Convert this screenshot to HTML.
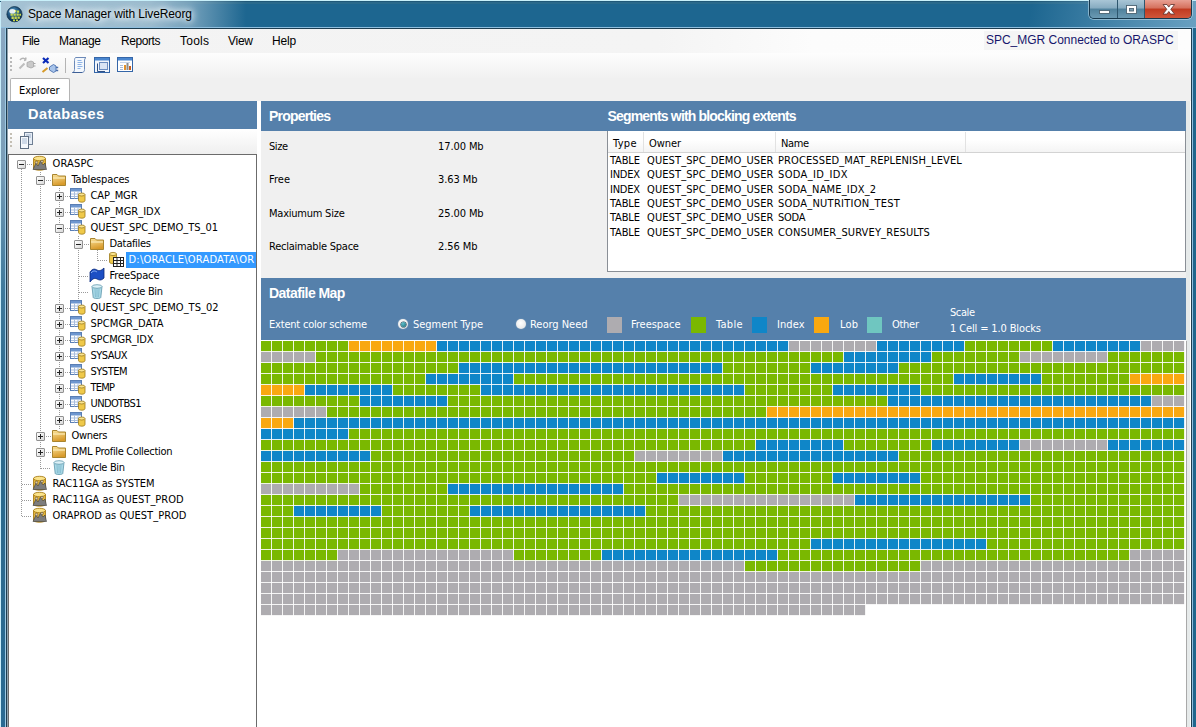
<!DOCTYPE html>
<html><head><meta charset="utf-8"><title>Space Manager with LiveReorg</title>
<style>
*{margin:0;padding:0;box-sizing:border-box}
html,body{width:1196px;height:727px;overflow:hidden}
body{position:relative;background:#3F7FA3;font-family:"DejaVu Sans Condensed","Liberation Sans","DejaVu Sans",sans-serif;font-size:11px;color:#000}
.abs,body>div,body>span{position:absolute}
#title{left:0;top:0;width:1196px;height:28px;background:linear-gradient(180deg,#c8f0fa 0,#c8f0fa 1px,#1f5878 1px,#1f5878 2px,#2a6a8c 2px,#2a6a8c 4px,#1d6690 4px,#1d6690 27px,#8fbfdf 27px,#8fbfdf 28px)}
#titleR{left:960px;top:1px;width:236px;height:26px;background:linear-gradient(100deg,rgba(110,165,198,0) 0,rgba(110,165,198,0) 30%,rgba(120,172,203,.55) 75%,rgba(130,180,210,.75) 100%)}
#titleL{left:1px;top:1px;width:250px;height:26px;background:linear-gradient(90deg,rgba(176,202,218,.92) 0,rgba(168,196,213,.9) 150px,rgba(150,184,205,.7) 190px,rgba(29,101,143,0) 245px)}
.tt0{position:absolute;top:7px;font-size:12px;color:#000;white-space:nowrap;font-family:"Liberation Sans",sans-serif;text-shadow:0 0 6px #fff,0 0 8px #fff,0 0 10px #cfe6f2}
.tb{position:absolute;top:84px;font-size:11px;white-space:nowrap}
.cn{position:absolute;top:33px;font-size:12px;color:#15156b;white-space:nowrap;font-family:"Liberation Sans",sans-serif}
.hb{position:absolute;color:#fff;font-weight:bold;white-space:nowrap;font-family:"Liberation Sans",sans-serif}
#frameL{left:0;top:28px;width:7px;height:699px;background:linear-gradient(90deg,#c8edfa 0,#c8edfa 1px,rgba(0,0,0,0) 1px,rgba(0,0,0,0) 5px,#9cc8e4 5px,#9cc8e4 6px,#1d3d50 6px,#1d3d50 7px),linear-gradient(180deg,#8aa8c2 0,#7a9eb8 130px,#3f7a9c 260px,#2d6a8c 380px,#2a6a92 699px)}
#frameR{left:1191px;top:28px;width:5px;height:699px;background:linear-gradient(90deg,#1d3d50 0,#1d3d50 1px,#8fbfdf 1px,#8fbfdf 2px,#23638a 2px,#1b6a90 5px)}
#client{left:7px;top:28px;width:1184px;height:699px;background:#f0f0f0;border-top:1px solid #1d3d50;border-left:1px solid #8fa2ae}
#menubar{left:8px;top:29px;width:1183px;height:24px;background:linear-gradient(90deg,#f3f3f3 0,#f4f4f4 55%,#fcfcfc 68%,#fdfdfd 100%)}
.mi{position:absolute;top:34px;font-size:12px;white-space:nowrap;font-family:"Liberation Sans",sans-serif}
.lb{font-family:"Liberation Sans",sans-serif}
#conn{left:984px;top:31px;width:194px;height:19px;background:#f5f5f5}
#toolbar{left:8px;top:53px;width:1183px;height:25px;background:linear-gradient(180deg,#fdfdfd,#f1f1f1)}
#tabstrip{left:8px;top:78px;width:1183px;height:23px;background:#f0f0f0}
#tab{left:10px;top:78px;width:60px;height:23px;background:#fff;border:1px solid #b4b4b4;border-bottom:none;border-radius:2px 2px 0 0;font-size:11px;line-height:21px;padding-left:9px}
.hdr{background:#5580ab;color:#fff}
#dbh{left:8px;top:101px;width:249px;height:28px}
#dbh span{position:absolute;left:20px;top:5px;font-weight:bold;font-size:14.5px;letter-spacing:1.1px}
#dbtb{left:8px;top:129px;width:249px;height:25px;background:linear-gradient(180deg,#fff,#efefef)}
#treebox{left:8px;top:154px;width:249px;height:580px;background:#fff;border:1px solid #6b6b6b}
#split{left:257px;top:101px;width:4px;height:626px;background:#fff}
#ph{left:261px;top:101px;width:925px;height:30px}
#ph b{position:absolute;top:7px;font-size:14px;letter-spacing:-.6px;white-space:nowrap}
#pbody{left:261px;top:131px;width:925px;height:147px;background:#f0f0f0}
.pl{position:absolute;font-size:11px;white-space:nowrap}
#list{left:607px;top:131px;width:579px;height:141px;background:#fff;border:1px solid #8a8f96;border-top:none}
#lh{left:608px;top:131px;width:577px;height:22px;background:linear-gradient(180deg,#fff 0,#fff 40%,#f4f4f4 100%);border-bottom:1px solid #d3d3d3}
.lhc{position:absolute;top:132px;height:20px;border-right:1px solid #e2e2e2}
.sg{position:absolute;font-size:11px;height:14px;line-height:14px;white-space:nowrap}
.lt{position:absolute;top:137px;font-size:11px;white-space:nowrap}
#mh{left:261px;top:278px;width:925px;height:63px}
#mh b{position:absolute;left:8px;top:7px;font-size:14px;letter-spacing:-.6px}
.ml{position:absolute;top:318px;font-size:11px;color:#fff;white-space:nowrap}
.sw{position:absolute;top:317px;width:15px;height:15.5px}
#rightpad{left:1186px;top:101px;width:5px;height:626px;background:linear-gradient(90deg,#e6eaea 0,#e6eaea 4px,#fff 4px)}
#mapbg{left:257px;top:340px;width:929px;height:387px;background:#fff}
#grid{left:261px;top:341px;width:924px;height:275px;overflow:hidden}
#grid i{position:absolute;height:11px;display:block}
#grid .g{background:#7ab800}#grid .b{background:#0f86c8}#grid .o{background:#f9a810}#grid .x{background:#aeacb0}
#gl{left:261px;top:341px;width:924px;height:275px;background:
 repeating-linear-gradient(90deg,transparent 0,transparent 10px,rgba(255,255,255,.88) 10px,rgba(255,255,255,.88) 11px),
 repeating-linear-gradient(180deg,transparent 0,transparent 10px,rgba(255,255,255,.88) 10px,rgba(255,255,255,.88) 11px)}
/* tree */
.ic{width:16px;height:16px;display:block}
.ti{position:absolute;width:16px;height:16px}
.tt{position:absolute;height:16px;line-height:16px;font-size:11px;white-space:nowrap;padding:0 2px;margin-left:-2px}
.tt.sel{background:#3399ff;color:#fff;overflow:hidden}
.ex{position:absolute;width:9px;height:9px;border:1px solid #919191;background:linear-gradient(135deg,#fff,#d8d8d8);border-radius:1px}
.ex .h{position:absolute;left:1px;top:3px;width:5px;height:1px;background:#222}
.ex .v{position:absolute;left:3px;top:1px;width:1px;height:5px;background:#222}
.hd{position:absolute;height:1px;background:repeating-linear-gradient(90deg,#9a9a9a 0,#9a9a9a 1px,transparent 1px,transparent 2px)}
.vd{position:absolute;width:1px;background:repeating-linear-gradient(180deg,#9a9a9a 0,#9a9a9a 1px,transparent 1px,transparent 2px)}
.radio{position:absolute;top:319px;width:10px;height:10px;border-radius:50%;background:radial-gradient(circle at 45% 40%,#fff 0,#ececec 60%,#d0d4d8 100%);box-shadow:0 0 1px rgba(255,255,255,.6)}
</style></head><body>
<div id="title"></div><div style="left:0;top:2px;width:1px;height:26px;background:#c8edfa"></div><div id="titleR"></div><div id="titleL"></div>
<div id="wb" style="left:1089px;top:0;width:103px;height:19px;border:1px solid #16384d;border-top:none;border-radius:0 0 5px 5px;overflow:hidden;box-shadow:0 0 0 1px rgba(200,225,238,.55)">
<span style="position:absolute;left:0;top:0;width:28px;height:18px;background:linear-gradient(180deg,#a9c6d6 0,#86abc0 45%,#4f819c 50%,#6b9ab3 100%);border-right:1px solid #2d566e"></span>
<span style="position:absolute;left:28px;top:0;width:27px;height:18px;background:linear-gradient(180deg,#a9c6d6 0,#86abc0 45%,#4f819c 50%,#6b9ab3 100%);border-right:1px solid #2d566e"></span>
<span style="position:absolute;left:55px;top:0;width:46px;height:18px;background:linear-gradient(180deg,#e8a093 0,#d5705c 45%,#c03a20 50%,#d0563a 100%)"></span>
<svg style="position:absolute;left:0;top:0" width="101" height="18" viewBox="0 0 101 18"><rect x="9.500" y="10.500" width="10" height="3" fill="#fff" stroke="#4d6472" stroke-width=".9"/><rect x="36.500" y="5.500" width="10" height="8" fill="#fff" stroke="#4d6472" stroke-width=".9"/><rect x="39.500" y="8.500" width="4" height="2.500" fill="#7ea0b3" stroke="#4d6472" stroke-width=".9"/><path d="M73 4.500h4l1.800 2.600 1.800-2.600h4l-3.800 4.800 3.800 4.800h-4l-1.800-2.600-1.800 2.600h-4l3.800-4.800z" fill="#fff" stroke="#6b3b34" stroke-width=".9"/></svg>
</div>
<div id="frameL"></div><div id="frameR"></div>
<div id="client"></div>
<div id="menubar"></div>
<div id="conn"></div>
<div id="toolbar"></div>
<div id="tabstrip"></div>
<div id="tab"></div>
<svg style="position:absolute;left:0;top:0" width="140" height="80" viewBox="0 0 140 80">
<!-- app icon -->
<defs><radialGradient id="gl1" cx=".4" cy=".3" r=".8"><stop offset="0" stop-color="#5aa0c8"/><stop offset=".5" stop-color="#1c4f7a"/><stop offset="1" stop-color="#0a2030"/></radialGradient></defs>
<circle cx="14.500" cy="14.200" r="7.600" fill="url(#gl1)" stroke="#10324a" stroke-width=".8"/>
<path d="M14 10h2.300v2.300H14zM17 10.500h2.200v2.200H17zM10.500 13.500h2.300v2.300h-2.300zM13.500 13.500h2.300v2.300h-2.300zM16.500 13.500h2.300v2.300h-2.300zM19.300 13.800h1.700v2h-1.700zM11.500 16.600h2.300v2.300h-2.300zM14.500 16.600h2.300v2.300h-2.300zM17.500 16.600h2.300v2.200h-2.300zM13 19.600h2v1.600h-2zM16 19.600h2v1.500h-2z" fill="#c9d94c"/>
<ellipse cx="12.300" cy="11.300" rx="3" ry="2.300" fill="#fff" opacity=".85"/>
<!-- grip -->
<path d="M10 58h2M10 62h2M10 66h2M10 70h2" stroke="#b9b9b9" stroke-width="2" stroke-dasharray="2 0"/>
<!-- icon1 gray connect -->
<path d="M20 60c2-2.500 5-2 5.500 0l-1.500.5M25.500 60l.5-2.500" stroke="#b5b5b5" stroke-width="1.500" fill="none"/>
<path d="M19.500 68.500l5-5" stroke="#bdbdbd" stroke-width="2"/>
<path d="M27 62.500l4-1.500 2.500 1v5l-2.500 1-4-1.500z" fill="#c9c9c9" stroke="#a6a6a6" stroke-width=".8"/><path d="M33.500 63.500h2M33.500 66h2" stroke="#a6a6a6" stroke-width="1.200"/>
<!-- icon2 blue X + plug -->
<path d="M43 58l5.500 5M48.500 58L43 63" stroke="#0a2bb8" stroke-width="2.200"/>
<path d="M42.500 72l5-4" stroke="#d69a28" stroke-width="2"/>
<path d="M49.500 67l4-2.500 2.500 1.500v5l-2.500 1.500-4-2.500z" fill="#a8c4ea" stroke="#4a6fae" stroke-width=".9"/><path d="M56 67.500h2.200M56 70.500h2.200" stroke="#4a6fae" stroke-width="1.300"/>
<!-- separator -->
<path d="M65.500 58v15" stroke="#b4b4b4" stroke-width="1"/>
<!-- icon3 script -->
<path d="M75.500 57.500h10.500c-1.200.8-1.500 2-1.500 3.500v8.500c0 2-1 3-2.500 3h-9.500c1.300-.5 2-1.500 2-3v-9c0-1.500.3-2.300 1-3z" fill="#f4f8fd" stroke="#6b89b8" stroke-width="1"/>
<path d="M77.500 60.500h4M77.500 62.500h5M77.500 64.500h4M77.500 66.500h5M77.500 68.500h3" stroke="#8db3e6" stroke-width="1"/>
<path d="M72.500 72.500h9.500" stroke="#3d5f96" stroke-width="1"/>
<!-- icon4 window -->
<rect x="94.500" y="57.500" width="15" height="15" fill="#f1f5fb" stroke="#3566a8"/><rect x="95" y="58" width="14" height="2.500" fill="#4a86cf"/>
<rect x="99.500" y="62.500" width="8" height="7" fill="#d9e4f4" stroke="#6a8cc0" stroke-width="1"/><path d="M97.500 63.500v8h7.500" stroke="#2d4f85" stroke-width="1" fill="none"/>
<!-- icon5 chart window -->
<rect x="117.500" y="57.500" width="15" height="14" fill="#fff" stroke="#3566a8"/><rect x="118" y="58" width="14" height="2.500" fill="#4a86cf"/>
<path d="M120 62.500h10" stroke="#c9d6ea" stroke-width="1"/><path d="M120 65.500h3M120 67.500h3M120 69.500h3" stroke="#a9bcd9" stroke-width="1"/>
<rect x="124" y="65" width="2" height="5" fill="#e0912c"/><rect x="126.500" y="63" width="2" height="7" fill="#8c8c8c"/><rect x="129" y="66" width="2" height="4" fill="#c9601f"/>
</svg>
<div id="dbh" class="hdr"></div>
<div id="dbtb"></div>
<svg style="position:absolute;left:8px;top:129px" width="40" height="25" viewBox="0 0 40 25"><path d="M2 5h2M2 9h2M2 13h2M2 17h2" stroke="#c4bfb4" stroke-width="2"/><rect x="16.500" y="3.500" width="8" height="12" fill="#e6edf6" stroke="#6f7f93"/><path d="M18 6h5M18 8h5" stroke="#9db1cb"/><rect x="12.500" y="7.500" width="8" height="12" fill="#f5f8fc" stroke="#5f6f83"/><path d="M14 10h5M14 12h5M14 14h5" stroke="#a9bbd3"/></svg>
<div id="treebox"></div>
<div id="treeitems" style="left:0;top:0"><span class="vd" style="left:21px;top:169px;height:348px"></span><span class="vd" style="left:40px;top:172px;height:297px"></span><span class="vd" style="left:59px;top:188px;height:241px"></span><span class="vd" style="left:78px;top:236px;height:65px"></span><span class="vd" style="left:97px;top:250px;height:11px"></span><span class="hd" style="left:27px;top:164px;width:5px"></span><span class="ex" style="left:17px;top:160px"><b class="h"></b></span><span class="ti" style="left:32px;top:155px"><svg class="ic" viewBox="0 0 16 16"><path d="M1.5 3.5v9.5c0 1.3 2.6 2.2 6 2.2s6-.9 6-2.200v-9.500z" fill="#E9B93A" stroke="#A97E17" stroke-width=".9"/><ellipse cx="7.5" cy="3.5" rx="6" ry="2.2" fill="#FBE38A" stroke="#A97E17" stroke-width=".9"/><path d="M1 14.500l3-6.500 2 3 2.500-5 2.500 4 2-2 1.500 6.500z" fill="#7d7d7d" stroke="#3c3c3c" stroke-width=".6"/><circle cx="4.500" cy="7.500" r="1.300" fill="#d9c9a8" stroke="#4b3f2a" stroke-width=".5"/><circle cx="10" cy="6.500" r="1.300" fill="#d9c9a8" stroke="#4b3f2a" stroke-width=".5"/></svg></span><span class="tt" style="left:52.5px;top:156px;letter-spacing:0.17px">ORASPC</span><span class="hd" style="left:46px;top:180px;width:5px"></span><span class="ex" style="left:36px;top:176px"><b class="h"></b></span><span class="ti" style="left:51px;top:171px"><svg class="ic" viewBox="0 0 16 16"><defs><linearGradient id="fg" x1="0" y1="0" x2="0.3" y2="1"><stop offset="0" stop-color="#FAE29A"/><stop offset="1" stop-color="#D89A2B"/></linearGradient></defs><path d="M1.5 3.5h4.5l1.5 1.5h7v9.5h-13z" fill="url(#fg)" stroke="#A9852F"/><path d="M2 7h12" stroke="#FFF3C4" stroke-width="1"/></svg></span><span class="tt" style="left:71.5px;top:172px;letter-spacing:-0.16px">Tablespaces</span><span class="hd" style="left:65px;top:196px;width:5px"></span><span class="ex" style="left:55px;top:192px"><b class="h"></b><b class="v"></b></span><span class="ti" style="left:70px;top:187px"><svg class="ic" viewBox="0 0 16 16"><rect x="0.5" y="1.5" width="11" height="10" fill="#fff" stroke="#5A7FB5"/><rect x="1" y="2" width="10" height="2.5" fill="#6E97D0"/><path d="M1 7h10M1 9.5h10M4.5 4.5v7M8 4.5v7" stroke="#A9BEDD" stroke-width="1"/><path d="M8.5 7.5v6c0 1 1.5 1.7 3.3 1.7s3.2-.7 3.200-1.700v-6z" fill="#EFC94A" stroke="#9C7A1C" stroke-width=".8"/><ellipse cx="11.700" cy="7.500" rx="3.200" ry="1.500" fill="#FAE48E" stroke="#9C7A1C" stroke-width=".8"/></svg></span><span class="tt" style="left:90.5px;top:188px;letter-spacing:-0.11px">CAP_MGR</span><span class="hd" style="left:65px;top:212px;width:5px"></span><span class="ex" style="left:55px;top:208px"><b class="h"></b><b class="v"></b></span><span class="ti" style="left:70px;top:203px"><svg class="ic" viewBox="0 0 16 16"><rect x="0.5" y="1.5" width="11" height="10" fill="#fff" stroke="#5A7FB5"/><rect x="1" y="2" width="10" height="2.5" fill="#6E97D0"/><path d="M1 7h10M1 9.5h10M4.5 4.5v7M8 4.5v7" stroke="#A9BEDD" stroke-width="1"/><path d="M8.5 7.5v6c0 1 1.5 1.7 3.3 1.7s3.2-.7 3.200-1.700v-6z" fill="#EFC94A" stroke="#9C7A1C" stroke-width=".8"/><ellipse cx="11.700" cy="7.500" rx="3.200" ry="1.500" fill="#FAE48E" stroke="#9C7A1C" stroke-width=".8"/></svg></span><span class="tt" style="left:90.5px;top:204px;letter-spacing:0.00px">CAP_MGR_IDX</span><span class="hd" style="left:65px;top:228px;width:5px"></span><span class="ex" style="left:55px;top:224px"><b class="h"></b></span><span class="ti" style="left:70px;top:219px"><svg class="ic" viewBox="0 0 16 16"><rect x="0.5" y="1.5" width="11" height="10" fill="#fff" stroke="#5A7FB5"/><rect x="1" y="2" width="10" height="2.5" fill="#6E97D0"/><path d="M1 7h10M1 9.5h10M4.5 4.5v7M8 4.5v7" stroke="#A9BEDD" stroke-width="1"/><path d="M8.5 7.5v6c0 1 1.5 1.7 3.3 1.7s3.2-.7 3.200-1.700v-6z" fill="#EFC94A" stroke="#9C7A1C" stroke-width=".8"/><ellipse cx="11.700" cy="7.500" rx="3.200" ry="1.500" fill="#FAE48E" stroke="#9C7A1C" stroke-width=".8"/></svg></span><span class="tt" style="left:90.5px;top:220px;letter-spacing:-0.01px">QUEST_SPC_DEMO_TS_01</span><span class="hd" style="left:84px;top:244px;width:5px"></span><span class="ex" style="left:74px;top:240px"><b class="h"></b></span><span class="ti" style="left:89px;top:235px"><svg class="ic" viewBox="0 0 16 16"><defs><linearGradient id="fg" x1="0" y1="0" x2="0.3" y2="1"><stop offset="0" stop-color="#FAE29A"/><stop offset="1" stop-color="#D89A2B"/></linearGradient></defs><path d="M1.5 3.5h4.5l1.5 1.5h7v9.5h-13z" fill="url(#fg)" stroke="#A9852F"/><path d="M2 7h12" stroke="#FFF3C4" stroke-width="1"/></svg></span><span class="tt" style="left:109.5px;top:236px;letter-spacing:-0.30px">Datafiles</span><span class="hd" style="left:98px;top:260px;width:10px"></span><span class="ti" style="left:108px;top:251px"><svg class="ic" viewBox="0 0 16 16"><path d="M1.500 3v8c0 1 1.500 1.700 3.500 1.700s3.500-.7 3.500-1.700v-8z" fill="#EFC94A" stroke="#9C7A1C" stroke-width=".8"/><ellipse cx="5" cy="3" rx="3.500" ry="1.600" fill="#FAE48E" stroke="#9C7A1C" stroke-width=".8"/><rect x="5.500" y="6.500" width="10" height="9" fill="#fff" stroke="#222"/><path d="M5.500 9.500h10M5.500 12.500h10M9 6.500v9M12.500 6.500v9" stroke="#222" stroke-width="1"/></svg></span><span class="tt sel" style="left:128.5px;top:252px;width:130px;margin-left:-3px;padding-left:3px;letter-spacing:0.22px">D:\ORACLE\ORADATA\OR</span><span class="hd" style="left:79px;top:276px;width:10px"></span><span class="ti" style="left:89px;top:267px"><svg class="ic" viewBox="0 0 16 16"><path d="M1 5c3-4 5-3 7-2s4 1 7-2v10c-3 3-5 2-7 1s-4-1-7 3z" fill="#1C4FC4" stroke="#0B2A7A" stroke-width=".8"/><path d="M2 6c2.500-3 4.500-2 6-1" stroke="#8FB4F5" fill="none"/></svg></span><span class="tt" style="left:109.5px;top:268px;letter-spacing:-0.13px">FreeSpace</span><span class="hd" style="left:79px;top:292px;width:10px"></span><span class="ti" style="left:89px;top:283px"><svg class="ic" viewBox="0 0 16 16"><path d="M3 3.5l1.200 11c.1.600 1.800 1 3.800 1s3.700-.4 3.800-1l1.200-11z" fill="#A9D8E6" stroke="#5E97AB" stroke-width=".8"/><ellipse cx="8" cy="3.5" rx="5" ry="1.800" fill="#DDF1F7" stroke="#5E97AB" stroke-width=".8"/><path d="M6 6l.5 8M10 6l-.5 8M8 6.200v8" stroke="#7FB9CC" stroke-width=".8"/></svg></span><span class="tt" style="left:109.5px;top:284px;letter-spacing:-0.35px">Recycle Bin</span><span class="hd" style="left:65px;top:308px;width:5px"></span><span class="ex" style="left:55px;top:304px"><b class="h"></b><b class="v"></b></span><span class="ti" style="left:70px;top:299px"><svg class="ic" viewBox="0 0 16 16"><rect x="0.5" y="1.5" width="11" height="10" fill="#fff" stroke="#5A7FB5"/><rect x="1" y="2" width="10" height="2.5" fill="#6E97D0"/><path d="M1 7h10M1 9.5h10M4.5 4.5v7M8 4.5v7" stroke="#A9BEDD" stroke-width="1"/><path d="M8.5 7.5v6c0 1 1.5 1.7 3.3 1.7s3.2-.7 3.200-1.700v-6z" fill="#EFC94A" stroke="#9C7A1C" stroke-width=".8"/><ellipse cx="11.700" cy="7.500" rx="3.200" ry="1.500" fill="#FAE48E" stroke="#9C7A1C" stroke-width=".8"/></svg></span><span class="tt" style="left:90.5px;top:300px;letter-spacing:0.02px">QUEST_SPC_DEMO_TS_02</span><span class="hd" style="left:65px;top:324px;width:5px"></span><span class="ex" style="left:55px;top:320px"><b class="h"></b><b class="v"></b></span><span class="ti" style="left:70px;top:315px"><svg class="ic" viewBox="0 0 16 16"><rect x="0.5" y="1.5" width="11" height="10" fill="#fff" stroke="#5A7FB5"/><rect x="1" y="2" width="10" height="2.5" fill="#6E97D0"/><path d="M1 7h10M1 9.5h10M4.5 4.5v7M8 4.5v7" stroke="#A9BEDD" stroke-width="1"/><path d="M8.5 7.5v6c0 1 1.5 1.7 3.3 1.7s3.2-.7 3.200-1.700v-6z" fill="#EFC94A" stroke="#9C7A1C" stroke-width=".8"/><ellipse cx="11.700" cy="7.500" rx="3.200" ry="1.500" fill="#FAE48E" stroke="#9C7A1C" stroke-width=".8"/></svg></span><span class="tt" style="left:90.5px;top:316px;letter-spacing:0.05px">SPCMGR_DATA</span><span class="hd" style="left:65px;top:340px;width:5px"></span><span class="ex" style="left:55px;top:336px"><b class="h"></b><b class="v"></b></span><span class="ti" style="left:70px;top:331px"><svg class="ic" viewBox="0 0 16 16"><rect x="0.5" y="1.5" width="11" height="10" fill="#fff" stroke="#5A7FB5"/><rect x="1" y="2" width="10" height="2.5" fill="#6E97D0"/><path d="M1 7h10M1 9.5h10M4.5 4.5v7M8 4.5v7" stroke="#A9BEDD" stroke-width="1"/><path d="M8.5 7.5v6c0 1 1.5 1.7 3.3 1.7s3.2-.7 3.200-1.700v-6z" fill="#EFC94A" stroke="#9C7A1C" stroke-width=".8"/><ellipse cx="11.700" cy="7.500" rx="3.200" ry="1.500" fill="#FAE48E" stroke="#9C7A1C" stroke-width=".8"/></svg></span><span class="tt" style="left:90.5px;top:332px;letter-spacing:-0.17px">SPCMGR_IDX</span><span class="hd" style="left:65px;top:356px;width:5px"></span><span class="ex" style="left:55px;top:352px"><b class="h"></b><b class="v"></b></span><span class="ti" style="left:70px;top:347px"><svg class="ic" viewBox="0 0 16 16"><rect x="0.5" y="1.5" width="11" height="10" fill="#fff" stroke="#5A7FB5"/><rect x="1" y="2" width="10" height="2.5" fill="#6E97D0"/><path d="M1 7h10M1 9.5h10M4.5 4.5v7M8 4.5v7" stroke="#A9BEDD" stroke-width="1"/><path d="M8.5 7.5v6c0 1 1.5 1.7 3.3 1.7s3.2-.7 3.200-1.700v-6z" fill="#EFC94A" stroke="#9C7A1C" stroke-width=".8"/><ellipse cx="11.700" cy="7.500" rx="3.200" ry="1.500" fill="#FAE48E" stroke="#9C7A1C" stroke-width=".8"/></svg></span><span class="tt" style="left:90.5px;top:348px;letter-spacing:-0.52px">SYSAUX</span><span class="hd" style="left:65px;top:372px;width:5px"></span><span class="ex" style="left:55px;top:368px"><b class="h"></b><b class="v"></b></span><span class="ti" style="left:70px;top:363px"><svg class="ic" viewBox="0 0 16 16"><rect x="0.5" y="1.5" width="11" height="10" fill="#fff" stroke="#5A7FB5"/><rect x="1" y="2" width="10" height="2.5" fill="#6E97D0"/><path d="M1 7h10M1 9.5h10M4.5 4.5v7M8 4.5v7" stroke="#A9BEDD" stroke-width="1"/><path d="M8.5 7.5v6c0 1 1.5 1.7 3.3 1.7s3.2-.7 3.200-1.700v-6z" fill="#EFC94A" stroke="#9C7A1C" stroke-width=".8"/><ellipse cx="11.700" cy="7.500" rx="3.200" ry="1.500" fill="#FAE48E" stroke="#9C7A1C" stroke-width=".8"/></svg></span><span class="tt" style="left:90.5px;top:364px;letter-spacing:-0.49px">SYSTEM</span><span class="hd" style="left:65px;top:388px;width:5px"></span><span class="ex" style="left:55px;top:384px"><b class="h"></b><b class="v"></b></span><span class="ti" style="left:70px;top:379px"><svg class="ic" viewBox="0 0 16 16"><rect x="0.5" y="1.5" width="11" height="10" fill="#fff" stroke="#5A7FB5"/><rect x="1" y="2" width="10" height="2.5" fill="#6E97D0"/><path d="M1 7h10M1 9.5h10M4.5 4.5v7M8 4.5v7" stroke="#A9BEDD" stroke-width="1"/><path d="M8.5 7.5v6c0 1 1.5 1.7 3.3 1.7s3.2-.7 3.200-1.700v-6z" fill="#EFC94A" stroke="#9C7A1C" stroke-width=".8"/><ellipse cx="11.700" cy="7.500" rx="3.200" ry="1.500" fill="#FAE48E" stroke="#9C7A1C" stroke-width=".8"/></svg></span><span class="tt" style="left:90.5px;top:380px;letter-spacing:-0.74px">TEMP</span><span class="hd" style="left:65px;top:404px;width:5px"></span><span class="ex" style="left:55px;top:400px"><b class="h"></b><b class="v"></b></span><span class="ti" style="left:70px;top:395px"><svg class="ic" viewBox="0 0 16 16"><rect x="0.5" y="1.5" width="11" height="10" fill="#fff" stroke="#5A7FB5"/><rect x="1" y="2" width="10" height="2.5" fill="#6E97D0"/><path d="M1 7h10M1 9.5h10M4.5 4.5v7M8 4.5v7" stroke="#A9BEDD" stroke-width="1"/><path d="M8.5 7.5v6c0 1 1.5 1.7 3.3 1.7s3.2-.7 3.200-1.700v-6z" fill="#EFC94A" stroke="#9C7A1C" stroke-width=".8"/><ellipse cx="11.700" cy="7.500" rx="3.200" ry="1.500" fill="#FAE48E" stroke="#9C7A1C" stroke-width=".8"/></svg></span><span class="tt" style="left:90.5px;top:396px;letter-spacing:-0.61px">UNDOTBS1</span><span class="hd" style="left:65px;top:420px;width:5px"></span><span class="ex" style="left:55px;top:416px"><b class="h"></b><b class="v"></b></span><span class="ti" style="left:70px;top:411px"><svg class="ic" viewBox="0 0 16 16"><rect x="0.5" y="1.5" width="11" height="10" fill="#fff" stroke="#5A7FB5"/><rect x="1" y="2" width="10" height="2.5" fill="#6E97D0"/><path d="M1 7h10M1 9.5h10M4.5 4.5v7M8 4.5v7" stroke="#A9BEDD" stroke-width="1"/><path d="M8.5 7.5v6c0 1 1.5 1.7 3.3 1.7s3.2-.7 3.200-1.700v-6z" fill="#EFC94A" stroke="#9C7A1C" stroke-width=".8"/><ellipse cx="11.700" cy="7.500" rx="3.200" ry="1.500" fill="#FAE48E" stroke="#9C7A1C" stroke-width=".8"/></svg></span><span class="tt" style="left:90.5px;top:412px;letter-spacing:-0.49px">USERS</span><span class="hd" style="left:46px;top:436px;width:5px"></span><span class="ex" style="left:36px;top:432px"><b class="h"></b><b class="v"></b></span><span class="ti" style="left:51px;top:427px"><svg class="ic" viewBox="0 0 16 16"><defs><linearGradient id="fg" x1="0" y1="0" x2="0.3" y2="1"><stop offset="0" stop-color="#FAE29A"/><stop offset="1" stop-color="#D89A2B"/></linearGradient></defs><path d="M1.5 3.5h4.5l1.5 1.5h7v9.5h-13z" fill="url(#fg)" stroke="#A9852F"/><path d="M2 7h12" stroke="#FFF3C4" stroke-width="1"/></svg></span><span class="tt" style="left:71.5px;top:428px;letter-spacing:-0.29px">Owners</span><span class="hd" style="left:46px;top:452px;width:5px"></span><span class="ex" style="left:36px;top:448px"><b class="h"></b><b class="v"></b></span><span class="ti" style="left:51px;top:443px"><svg class="ic" viewBox="0 0 16 16"><defs><linearGradient id="fg" x1="0" y1="0" x2="0.3" y2="1"><stop offset="0" stop-color="#FAE29A"/><stop offset="1" stop-color="#D89A2B"/></linearGradient></defs><path d="M1.5 3.5h4.5l1.5 1.5h7v9.5h-13z" fill="url(#fg)" stroke="#A9852F"/><path d="M2 7h12" stroke="#FFF3C4" stroke-width="1"/></svg></span><span class="tt" style="left:71.5px;top:444px;letter-spacing:-0.32px">DML Profile Collection</span><span class="hd" style="left:41px;top:468px;width:10px"></span><span class="ti" style="left:51px;top:459px"><svg class="ic" viewBox="0 0 16 16"><path d="M3 3.5l1.200 11c.1.600 1.800 1 3.800 1s3.700-.4 3.800-1l1.200-11z" fill="#A9D8E6" stroke="#5E97AB" stroke-width=".8"/><ellipse cx="8" cy="3.5" rx="5" ry="1.800" fill="#DDF1F7" stroke="#5E97AB" stroke-width=".8"/><path d="M6 6l.5 8M10 6l-.5 8M8 6.200v8" stroke="#7FB9CC" stroke-width=".8"/></svg></span><span class="tt" style="left:71.5px;top:460px;letter-spacing:-0.35px">Recycle Bin</span><span class="hd" style="left:22px;top:484px;width:10px"></span><span class="ti" style="left:32px;top:475px"><svg class="ic" viewBox="0 0 16 16"><path d="M1.5 3.5v9.5c0 1.3 2.6 2.2 6 2.2s6-.9 6-2.200v-9.500z" fill="#E9B93A" stroke="#A97E17" stroke-width=".9"/><ellipse cx="7.5" cy="3.5" rx="6" ry="2.2" fill="#FBE38A" stroke="#A97E17" stroke-width=".9"/><path d="M1 14.500l3-6.500 2 3 2.500-5 2.500 4 2-2 1.500 6.500z" fill="#7d7d7d" stroke="#3c3c3c" stroke-width=".6"/><circle cx="4.500" cy="7.500" r="1.300" fill="#d9c9a8" stroke="#4b3f2a" stroke-width=".5"/><circle cx="10" cy="6.500" r="1.300" fill="#d9c9a8" stroke="#4b3f2a" stroke-width=".5"/></svg></span><span class="tt" style="left:52.5px;top:476px;letter-spacing:-0.12px">RAC11GA as SYSTEM</span><span class="hd" style="left:22px;top:500px;width:10px"></span><span class="ti" style="left:32px;top:491px"><svg class="ic" viewBox="0 0 16 16"><path d="M1.5 3.5v9.5c0 1.3 2.6 2.2 6 2.2s6-.9 6-2.200v-9.500z" fill="#E9B93A" stroke="#A97E17" stroke-width=".9"/><ellipse cx="7.5" cy="3.5" rx="6" ry="2.2" fill="#FBE38A" stroke="#A97E17" stroke-width=".9"/><path d="M1 14.500l3-6.500 2 3 2.500-5 2.500 4 2-2 1.500 6.500z" fill="#7d7d7d" stroke="#3c3c3c" stroke-width=".6"/><circle cx="4.500" cy="7.500" r="1.300" fill="#d9c9a8" stroke="#4b3f2a" stroke-width=".5"/><circle cx="10" cy="6.500" r="1.300" fill="#d9c9a8" stroke="#4b3f2a" stroke-width=".5"/></svg></span><span class="tt" style="left:52.5px;top:492px;letter-spacing:-0.01px">RAC11GA as QUEST_PROD</span><span class="hd" style="left:22px;top:516px;width:10px"></span><span class="ti" style="left:32px;top:507px"><svg class="ic" viewBox="0 0 16 16"><path d="M1.5 3.5v9.5c0 1.3 2.6 2.2 6 2.2s6-.9 6-2.200v-9.500z" fill="#E9B93A" stroke="#A97E17" stroke-width=".9"/><ellipse cx="7.5" cy="3.5" rx="6" ry="2.2" fill="#FBE38A" stroke="#A97E17" stroke-width=".9"/><path d="M1 14.500l3-6.500 2 3 2.500-5 2.500 4 2-2 1.500 6.500z" fill="#7d7d7d" stroke="#3c3c3c" stroke-width=".6"/><circle cx="4.500" cy="7.500" r="1.300" fill="#d9c9a8" stroke="#4b3f2a" stroke-width=".5"/><circle cx="10" cy="6.500" r="1.300" fill="#d9c9a8" stroke="#4b3f2a" stroke-width=".5"/></svg></span><span class="tt" style="left:52.5px;top:508px;letter-spacing:0.02px">ORAPROD as QUEST_PROD</span></div>
<div id="split"></div>
<div id="ph" class="hdr"></div>
<div id="pbody"></div>
<div id="list"></div><div id="lh"></div>
<div class="lhc" style="left:608px;width:36px"></div><div class="lhc" style="left:644px;width:132px"></div><div class="lhc" style="left:776px;width:190px"></div>
<div id="mh" class="hdr"></div>

<span class="radio" style="left:398px"><i style="position:absolute;left:2.5px;top:2.5px;width:5px;height:5px;border-radius:50%;background:radial-gradient(circle at 40% 35%,#5fc0cc,#12606f);box-shadow:0 0 0 .6px #2b4a5a"></i></span>
<span class="radio" style="left:516px"></span>
<span class="sw" style="left:607px;background:#aeacb0"></span>
<span class="sw" style="left:691px;background:#7ab800"></span>
<span class="sw" style="left:752px;background:#0f86c8"></span>
<span class="sw" style="left:814px;background:#f9a810"></span>
<span class="sw" style="left:867px;background:#6fc6c0"></span>

<div id="mapbg"></div>
<div id="grid"><i class="g" style="left:0px;top:0px;width:88px"></i><i class="o" style="left:88px;top:0px;width:88px"></i><i class="b" style="left:176px;top:0px;width:352px"></i><i class="x" style="left:528px;top:0px;width:88px"></i><i class="b" style="left:616px;top:0px;width:88px"></i><i class="g" style="left:704px;top:0px;width:88px"></i><i class="b" style="left:792px;top:0px;width:88px"></i><i class="x" style="left:880px;top:0px;width:44px"></i><i class="x" style="left:0px;top:11px;width:55px"></i><i class="g" style="left:55px;top:11px;width:528px"></i><i class="b" style="left:583px;top:11px;width:88px"></i><i class="g" style="left:671px;top:11px;width:88px"></i><i class="x" style="left:759px;top:11px;width:88px"></i><i class="g" style="left:847px;top:11px;width:77px"></i><i class="g" style="left:0px;top:22px;width:198px"></i><i class="b" style="left:198px;top:22px;width:264px"></i><i class="g" style="left:462px;top:22px;width:88px"></i><i class="b" style="left:550px;top:22px;width:88px"></i><i class="g" style="left:638px;top:22px;width:286px"></i><i class="g" style="left:0px;top:33px;width:165px"></i><i class="b" style="left:165px;top:33px;width:88px"></i><i class="g" style="left:253px;top:33px;width:440px"></i><i class="b" style="left:693px;top:33px;width:88px"></i><i class="g" style="left:781px;top:33px;width:88px"></i><i class="o" style="left:869px;top:33px;width:55px"></i><i class="o" style="left:0px;top:44px;width:44px"></i><i class="b" style="left:44px;top:44px;width:88px"></i><i class="g" style="left:132px;top:44px;width:88px"></i><i class="b" style="left:220px;top:44px;width:264px"></i><i class="g" style="left:484px;top:44px;width:88px"></i><i class="b" style="left:572px;top:44px;width:88px"></i><i class="g" style="left:660px;top:44px;width:264px"></i><i class="g" style="left:0px;top:55px;width:99px"></i><i class="b" style="left:99px;top:55px;width:88px"></i><i class="g" style="left:187px;top:55px;width:440px"></i><i class="b" style="left:627px;top:55px;width:264px"></i><i class="x" style="left:891px;top:55px;width:33px"></i><i class="x" style="left:0px;top:66px;width:66px"></i><i class="g" style="left:66px;top:66px;width:440px"></i><i class="o" style="left:506px;top:66px;width:418px"></i><i class="o" style="left:0px;top:77px;width:33px"></i><i class="b" style="left:33px;top:77px;width:891px"></i><i class="b" style="left:0px;top:88px;width:88px"></i><i class="g" style="left:88px;top:88px;width:836px"></i><i class="g" style="left:0px;top:99px;width:495px"></i><i class="b" style="left:495px;top:99px;width:88px"></i><i class="g" style="left:583px;top:99px;width:88px"></i><i class="b" style="left:671px;top:99px;width:88px"></i><i class="x" style="left:759px;top:99px;width:88px"></i><i class="b" style="left:847px;top:99px;width:77px"></i><i class="b" style="left:0px;top:110px;width:110px"></i><i class="g" style="left:110px;top:110px;width:264px"></i><i class="x" style="left:374px;top:110px;width:88px"></i><i class="b" style="left:462px;top:110px;width:176px"></i><i class="g" style="left:638px;top:110px;width:286px"></i><i class="g" style="left:0px;top:121px;width:924px"></i><i class="g" style="left:0px;top:132px;width:396px"></i><i class="b" style="left:396px;top:132px;width:88px"></i><i class="g" style="left:484px;top:132px;width:88px"></i><i class="b" style="left:572px;top:132px;width:88px"></i><i class="g" style="left:660px;top:132px;width:264px"></i><i class="x" style="left:0px;top:143px;width:99px"></i><i class="g" style="left:99px;top:143px;width:88px"></i><i class="b" style="left:187px;top:143px;width:176px"></i><i class="g" style="left:363px;top:143px;width:561px"></i><i class="g" style="left:0px;top:154px;width:418px"></i><i class="x" style="left:418px;top:154px;width:176px"></i><i class="b" style="left:594px;top:154px;width:176px"></i><i class="g" style="left:770px;top:154px;width:154px"></i><i class="g" style="left:0px;top:165px;width:33px"></i><i class="b" style="left:33px;top:165px;width:88px"></i><i class="g" style="left:121px;top:165px;width:88px"></i><i class="b" style="left:209px;top:165px;width:176px"></i><i class="g" style="left:385px;top:165px;width:539px"></i><i class="g" style="left:0px;top:176px;width:924px"></i><i class="g" style="left:0px;top:187px;width:924px"></i><i class="g" style="left:0px;top:198px;width:550px"></i><i class="b" style="left:550px;top:198px;width:176px"></i><i class="g" style="left:726px;top:198px;width:198px"></i><i class="g" style="left:0px;top:209px;width:77px"></i><i class="x" style="left:77px;top:209px;width:176px"></i><i class="g" style="left:253px;top:209px;width:88px"></i><i class="b" style="left:341px;top:209px;width:176px"></i><i class="g" style="left:517px;top:209px;width:352px"></i><i class="x" style="left:869px;top:209px;width:55px"></i><i class="x" style="left:0px;top:220px;width:484px"></i><i class="g" style="left:484px;top:220px;width:176px"></i><i class="x" style="left:660px;top:220px;width:264px"></i><i class="x" style="left:0px;top:231px;width:924px"></i><i class="x" style="left:0px;top:242px;width:924px"></i><i class="x" style="left:0px;top:253px;width:924px"></i><i class="x" style="left:0px;top:264px;width:605px"></i></div><div id="gl"></div>
<div id="rightpad"></div><div style="left:1186px;top:341px;width:1px;height:386px;background:#a9a9a9"></div>
<div id="texts" style="left:0;top:0"><span class="mi" style="left:22px;letter-spacing:-0.45px">File</span><span class="mi" style="left:59px;letter-spacing:-0.28px">Manage</span><span class="mi" style="left:121px;letter-spacing:-0.42px">Reports</span><span class="mi" style="left:180px;letter-spacing:0.25px">Tools</span><span class="mi" style="left:228px;letter-spacing:-0.27px">View</span><span class="mi" style="left:272px;letter-spacing:-0.13px">Help</span><span class="tt0" style="left:28px;letter-spacing:-0.13px">Space Manager with LiveReorg</span><span class="tb" style="left:19px;letter-spacing:-0.10px">Explorer</span><span class="cn" style="left:986px;letter-spacing:-0.02px">SPC_MGR Connected to ORASPC</span><span class="hb" style="left:28px;top:106px;letter-spacing:0.43px;font-size:14.5px">Databases</span><span class="hb" style="left:269px;top:108px;letter-spacing:-0.81px;font-size:14px">Properties</span><span class="hb" style="left:607.5px;top:108px;letter-spacing:-0.83px;font-size:14px">Segments with blocking extents</span><span class="hb" style="left:269px;top:285px;letter-spacing:-0.55px;font-size:14px">Datafile Map</span><span class="pl" style="left:269px;top:140px;letter-spacing:-0.44px">Size</span><span class="pl" style="left:438px;top:140px;letter-spacing:-0.09px">17.00 Mb</span><span class="pl" style="left:269px;top:173px;letter-spacing:0.03px">Free</span><span class="pl" style="left:438px;top:173px;letter-spacing:-0.08px">3.63 Mb</span><span class="pl" style="left:269px;top:207px;letter-spacing:-0.23px">Maxiumum Size</span><span class="pl" style="left:438px;top:207px;letter-spacing:-0.09px">25.00 Mb</span><span class="pl" style="left:269px;top:240px;letter-spacing:-0.23px">Reclaimable Space</span><span class="pl" style="left:438px;top:240px;letter-spacing:-0.08px">2.56 Mb</span><span class="ml" style="left:269px;letter-spacing:-0.20px">Extent color scheme</span><span class="ml" style="left:413px;letter-spacing:-0.02px">Segment Type</span><span class="ml" style="left:530px;letter-spacing:-0.02px">Reorg Need</span><span class="ml" style="left:631px;letter-spacing:-0.05px">Freespace</span><span class="ml" style="left:716px;letter-spacing:0.27px">Table</span><span class="ml" style="left:777px;letter-spacing:0.07px">Index</span><span class="ml" style="left:840px;letter-spacing:0.17px">Lob</span><span class="ml" style="left:892px;letter-spacing:-0.28px">Other</span><span class="ml" style="left:950px;top:306px;letter-spacing:-0.41px">Scale</span><span class="ml" style="left:950px;top:322px;letter-spacing:-0.13px">1 Cell = 1.0 Blocks</span><span class="lt" style="left:613px;letter-spacing:0.31px">Type</span><span class="lt" style="left:649px;letter-spacing:-0.08px">Owner</span><span class="lt" style="left:781px;letter-spacing:-0.40px">Name</span><span class="sg" style="left:610px;top:154.0px;letter-spacing:-0.13px">TABLE</span><span class="sg" style="left:647px;top:154.0px;letter-spacing:0.11px">QUEST_SPC_DEMO_USER</span><span class="sg" style="left:778px;top:154.0px;letter-spacing:0.11px">PROCESSED_MAT_REPLENISH_LEVEL</span><span class="sg" style="left:610px;top:168.3px;letter-spacing:-0.25px">INDEX</span><span class="sg" style="left:647px;top:168.3px;letter-spacing:0.11px">QUEST_SPC_DEMO_USER</span><span class="sg" style="left:778px;top:168.3px;letter-spacing:0.35px">SODA_ID_IDX</span><span class="sg" style="left:610px;top:182.6px;letter-spacing:-0.25px">INDEX</span><span class="sg" style="left:647px;top:182.6px;letter-spacing:0.11px">QUEST_SPC_DEMO_USER</span><span class="sg" style="left:778px;top:182.6px;letter-spacing:0.17px">SODA_NAME_IDX_2</span><span class="sg" style="left:610px;top:196.9px;letter-spacing:-0.13px">TABLE</span><span class="sg" style="left:647px;top:196.9px;letter-spacing:0.11px">QUEST_SPC_DEMO_USER</span><span class="sg" style="left:778px;top:196.9px;letter-spacing:0.25px">SODA_NUTRITION_TEST</span><span class="sg" style="left:610px;top:211.2px;letter-spacing:-0.13px">TABLE</span><span class="sg" style="left:647px;top:211.2px;letter-spacing:0.11px">QUEST_SPC_DEMO_USER</span><span class="sg" style="left:778px;top:211.2px;letter-spacing:-0.26px">SODA</span><span class="sg" style="left:610px;top:225.5px;letter-spacing:-0.13px">TABLE</span><span class="sg" style="left:647px;top:225.5px;letter-spacing:0.11px">QUEST_SPC_DEMO_USER</span><span class="sg" style="left:778px;top:225.5px;letter-spacing:0.13px">CONSUMER_SURVEY_RESULTS</span></div>
</body></html>
